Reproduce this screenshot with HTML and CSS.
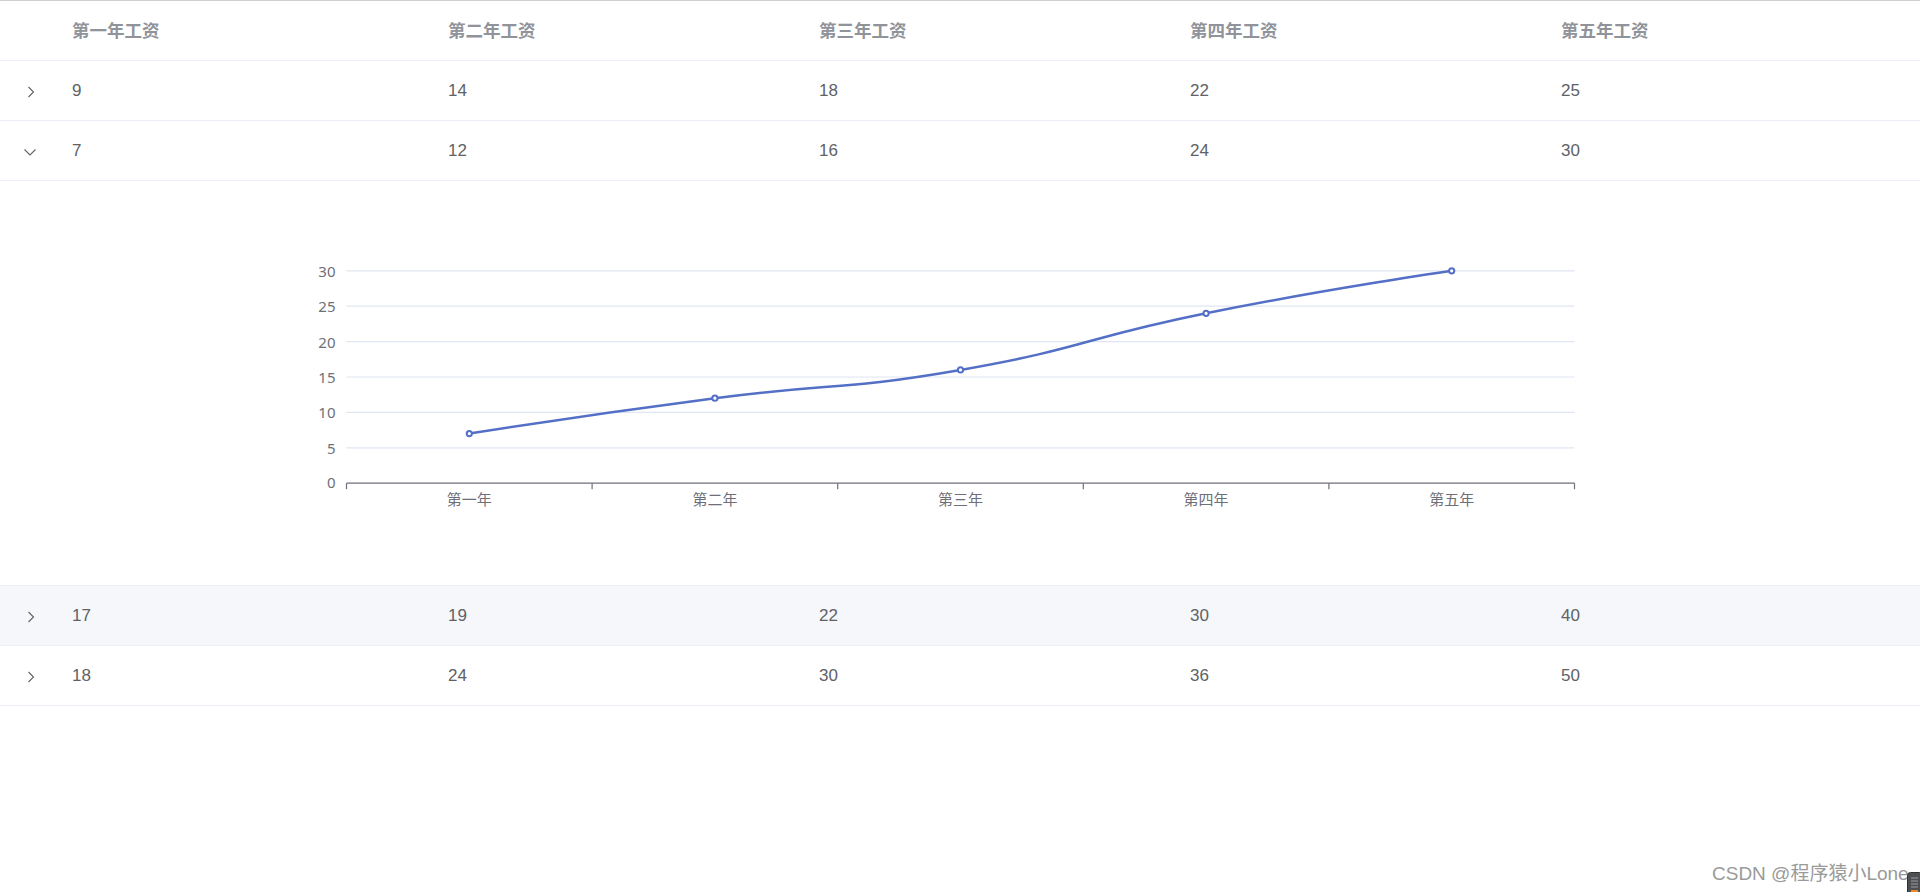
FILE: index.html
```html
<!DOCTYPE html>
<html lang="zh-CN">
<head>
<meta charset="utf-8">
<title>工资表</title>
<link rel="stylesheet" href="styles.css">
</head>
<body>
<div class="page">
  <div class="table">
    <div class="row head">
      <div class="cell"></div>
      <div class="cell">第一年工资</div>
      <div class="cell">第二年工资</div>
      <div class="cell">第三年工资</div>
      <div class="cell">第四年工资</div>
      <div class="cell">第五年工资</div>
    </div>
    <div class="row">
      <div class="cell expand"><svg class="chev" viewBox="0 0 14 14"><polyline points="4.5,2 9.5,7 4.5,12"/></svg></div>
      <div class="cell">9</div>
      <div class="cell">14</div>
      <div class="cell">18</div>
      <div class="cell">22</div>
      <div class="cell">25</div>
    </div>
    <div class="row">
      <div class="cell expand"><svg class="chev down" viewBox="0 0 14 14"><polyline points="1.5,4.5 7,10 12.5,4.5"/></svg></div>
      <div class="cell">7</div>
      <div class="cell">12</div>
      <div class="cell">16</div>
      <div class="cell">24</div>
      <div class="cell">30</div>
    </div>
    <div class="expanded">
      <svg class="chart" width="1920" height="405" viewBox="0 1.3 1920 405">
        <g class="grid">
          <line x1="346.5" x2="1574.5" y1="91.1" y2="91.1"/>
          <line x1="346.5" x2="1574.5" y1="126.5" y2="126.5"/>
          <line x1="346.5" x2="1574.5" y1="161.9" y2="161.9"/>
          <line x1="346.5" x2="1574.5" y1="197.3" y2="197.3"/>
          <line x1="346.5" x2="1574.5" y1="232.7" y2="232.7"/>
          <line x1="346.5" x2="1574.5" y1="268.1" y2="268.1"/>
        </g>
        <g class="axis">
          <line x1="346.5" x2="1574.5" y1="303.5" y2="303.5"/>
          <line x1="346.5" x2="346.5" y1="303.5" y2="309.5"/>
          <line x1="592.1" x2="592.1" y1="303.5" y2="309.5"/>
          <line x1="837.7" x2="837.7" y1="303.5" y2="309.5"/>
          <line x1="1083.3" x2="1083.3" y1="303.5" y2="309.5"/>
          <line x1="1328.9" x2="1328.9" y1="303.5" y2="309.5"/>
          <line x1="1574.5" x2="1574.5" y1="303.5" y2="309.5"/>
        </g>
        <g class="ylabels">
          <text x="335.5" y="91.1">30</text>
          <text x="335.5" y="126.5">25</text>
          <text x="335.5" y="161.9">20</text>
          <text x="335.5" y="197.3">15</text>
          <text x="335.5" y="232.7">10</text>
          <text x="335.5" y="268.1">5</text>
          <text x="335.5" y="302.5">0</text>
        </g>
        <g class="xlabels">
          <text x="469.3" y="319">第一年</text>
          <text x="714.9" y="319">第二年</text>
          <text x="960.5" y="319">第三年</text>
          <text x="1206.1" y="319">第四年</text>
          <text x="1451.7" y="319">第五年</text>
        </g>
        <path class="series" d="M469.3 253.9 C469.3 253.9 591.9 234.5 714.9 218.5 C837.5 202.6 839 211.2 960.5 190.2 C1084.6 168.7 1082.7 158.5 1206.1 133.6 C1328.3 108.9 1451.7 91.1 1451.7 91.1"/>
        <g class="dots">
          <circle cx="469.3" cy="253.9" r="2.6"/>
          <circle cx="714.9" cy="218.5" r="2.6"/>
          <circle cx="960.5" cy="190.2" r="2.6"/>
          <circle cx="1206.1" cy="133.6" r="2.6"/>
          <circle cx="1451.7" cy="91.1" r="2.6"/>
        </g>
      </svg>
    </div>
    <div class="row hover">
      <div class="cell expand"><svg class="chev" viewBox="0 0 14 14"><polyline points="4.5,2 9.5,7 4.5,12"/></svg></div>
      <div class="cell">17</div>
      <div class="cell">19</div>
      <div class="cell">22</div>
      <div class="cell">30</div>
      <div class="cell">40</div>
    </div>
    <div class="row">
      <div class="cell expand"><svg class="chev" viewBox="0 0 14 14"><polyline points="4.5,2 9.5,7 4.5,12"/></svg></div>
      <div class="cell">18</div>
      <div class="cell">24</div>
      <div class="cell">30</div>
      <div class="cell">36</div>
      <div class="cell">50</div>
    </div>
  </div>
  <div class="watermark">CSDN @程序猿小Lone</div>
  <svg class="widget" width="14" height="22" viewBox="0 0 14 22">
    <rect x="0.5" y="0.5" width="15" height="24" rx="3" fill="#4d4f52" stroke="#2e3033"/>
    <line x1="4" x2="11" y1="6" y2="6" stroke="#9a9ca0" stroke-width="1"/>
    <line x1="4" x2="11" y1="9" y2="9" stroke="#9a9ca0" stroke-width="1"/>
    <line x1="4" x2="11" y1="12" y2="12" stroke="#9a9ca0" stroke-width="1"/>
    <line x1="4" x2="11" y1="15" y2="15" stroke="#9a9ca0" stroke-width="1"/>
    <rect x="4" y="18" width="7" height="2" fill="#f08a24"/>
  </svg>
</div>
</body>
</html>
```
FILE: styles.css
```css
html, body {
  margin: 0;
  padding: 0;
  background: #ffffff;
}

.page {
  position: relative;
  width: 1920px;
  height: 892px;
  overflow: hidden;
  border-top: 1px solid #cfcfcf;
  box-sizing: border-box;
  font-family: "Liberation Sans", "Noto Sans CJK SC", sans-serif;
}

.table {
  display: flex;
  flex-direction: column;
}

.row {
  display: grid;
  grid-template-columns: 59px 376px 371px 371px 371px 1fr;
  height: 60px;
  border-bottom: 1px solid #ebeef5;
  box-sizing: border-box;
  align-items: center;
  font-size: 17px;
  color: #606266;
}

.row.head {
  height: 60px;
  color: #909399;
  font-weight: bold;
  font-family: "Noto Sans CJK SC", sans-serif;
  font-size: 17.5px;
}

.row.head .cell {
  margin-top: -1px;
}

.row.hover {
  background: #f5f7fa;
}

.cell {
  padding-left: 13px;
  line-height: 20px;
  white-space: nowrap;
}

.cell.expand {
  padding-left: 3px;
  display: flex;
  justify-content: center;
  align-items: center;
}

.chev {
  width: 14px;
  height: 14px;
  fill: none;
  stroke: #606266;
  stroke-width: 1.1;
  margin-top: 3px;
}

.chev.down {
  margin-top: 2px;
  margin-left: -2px;
}

.expanded {
  height: 405px;
  border-bottom: 1px solid #ebeef5;
  box-sizing: border-box;
}

.chart {
  display: block;
}

.grid line {
  stroke: #e0e6f1;
  stroke-width: 1.2;
}

.axis line {
  stroke: #6e7079;
  stroke-width: 1.2;
}

.ylabels text {
  font-family: "Noto Sans", "Noto Sans CJK SC", sans-serif;
  font-size: 15px;
  fill: #6e7079;
  text-anchor: end;
  dominant-baseline: central;
}

.xlabels text {
  font-family: "Noto Sans CJK SC", sans-serif;
  font-size: 15px;
  fill: #6e7079;
  text-anchor: middle;
  dominant-baseline: central;
}

.series {
  fill: none;
  stroke: #5470c6;
  stroke-width: 2.5;
  stroke-linejoin: round;
}

.dots circle {
  fill: #ffffff;
  stroke: #5470c6;
  stroke-width: 2;
}

.watermark {
  position: absolute;
  left: 1712px;
  top: 861px;
  font-family: "Liberation Sans", "Noto Sans CJK SC", sans-serif;
  font-size: 19px;
  line-height: 24px;
  color: #9a9a9a;
  text-shadow: 0 0 1px #ffffff, 0 0 2px #ffffff;
  white-space: nowrap;
}

.widget {
  position: absolute;
  left: 1907px;
  top: 871px;
}
```
